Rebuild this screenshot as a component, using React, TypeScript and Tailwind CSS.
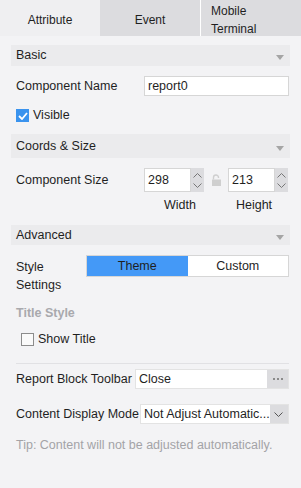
import React from 'react';

const font = { fontFamily: '"Liberation Sans", Arial, sans-serif' };

const SectionHeader = ({ title, h }: { title: string; h: string }) => (
  <div className={`flex items-center justify-between bg-[#ebebed] pl-[5px] pr-[6px] ${h}`}>
    <span className="text-[12.5px] text-[#1f1f1f]">{title}</span>
    <svg width="8" height="5" viewBox="0 0 8 5" className="mt-[4px]">
      <path d="M0 0 H8 L4 5 Z" fill="#a5a5a5" />
    </svg>
  </div>
);

const Spinner = () => (
  <div className="flex w-[13px] flex-col items-center justify-center gap-[5px] bg-[#dcdcdf]">
    <svg width="9" height="5" viewBox="0 0 9 5">
      <path d="M0.5 4.5 L4.5 0.5 L8.5 4.5" fill="none" stroke="#777" strokeWidth="1" />
    </svg>
    <svg width="9" height="5" viewBox="0 0 9 5">
      <path d="M0.5 0.5 L4.5 4.5 L8.5 0.5" fill="none" stroke="#777" strokeWidth="1" />
    </svg>
  </div>
);

const NumberBox = ({ value }: { value: string }) => (
  <div className="flex h-[24px]">
    <div className="flex w-[47px] items-center border border-[#d6d6d6] bg-white pl-[3px] text-[12.5px] text-[#1f1f1f]">
      {value}
    </div>
    <Spinner />
  </div>
);

export default function App() {
  return (
    <div className="h-[488px] w-[301px] overflow-hidden bg-[#f3f3f5]" style={font}>
      {/* tabs */}
      <div className="flex h-[36px] text-[12px] text-[#1f1f1f]">
        <div className="flex w-[100px] items-center justify-center bg-[#efeff1] pt-[3px]">Attribute</div>
        <div className="flex w-[100px] items-center justify-center bg-[#dcdcdf] pt-[3px]">Event</div>
        <div className="w-px bg-white" />
        <div className="flex-1 bg-[#dcdcdf] pl-[10px] pt-[2px] leading-[18px]">
          Mobile
          <br />
          Terminal
        </div>
      </div>

      <div className="flex flex-col px-[11px] pt-[9px] text-[12.5px] text-[#1f1f1f]">
        <SectionHeader title="Basic" h="h-[21px]" />

        <div className="mt-[10px] flex h-[20px] items-center pl-[5px] pr-[1px]">
          <span className="flex-1">Component Name</span>
          <div className="flex h-full w-[145px] items-center border border-[#d6d6d6] bg-white pl-[3px]">report0</div>
        </div>

        <div className="mt-[13px] flex h-[13px] items-center gap-[4px] pl-[5px]">
          <div className="flex h-[13px] w-[13px] items-center justify-center bg-[#3a93ee]">
            <svg width="10" height="8" viewBox="0 0 10 8">
              <path d="M1 4 L4 7 L9 1" fill="none" stroke="white" strokeWidth="1.8" />
            </svg>
          </div>
          <span>Visible</span>
        </div>

        <div className="mt-[12px]">
          <SectionHeader title="Coords & Size" h="h-[24px]" />
        </div>

        <div className="mt-[10px] flex h-[24px] items-center pl-[5px]">
          <span className="w-[128px]">Component Size</span>
          <NumberBox value="298" />
          <div className="flex w-[24px] justify-center">
            <svg width="9" height="12" viewBox="0 0 9 12">
              <path d="M1.5 5.5 V3.5 a2.5 2.5 0 0 1 5 0 V4" fill="none" stroke="#cfcfcf" strokeWidth="1.4" />
              <rect x="0" y="5.5" width="9" height="6.5" fill="#cfcfcf" />
            </svg>
          </div>
          <NumberBox value="213" />
        </div>

        <div className="mt-[5px] flex h-[16px] items-center pl-[153px]">
          <span>Width</span>
          <span className="ml-[40px]">Height</span>
        </div>

        <div className="mt-[12px]">
          <SectionHeader title="Advanced" h="h-[20px]" />
        </div>

        <div className="mt-[10px] flex pl-[5px] pr-[1px]">
          <div className="mt-[3px] w-[70px] leading-[18px]">
            Style
            <br />
            Settings
          </div>
          <div className="flex h-[22px] flex-1 border border-[#d6d6d6] bg-white">
            <div className="flex flex-1 items-center justify-center bg-[#4499f7]">Theme</div>
            <div className="flex flex-1 items-center justify-center">Custom</div>
          </div>
        </div>

        <div className="mt-[11px] flex h-[16px] items-center pl-[5px] font-bold text-[#a9a9ad]">Title Style</div>

        <div className="mt-[12px] flex h-[13px] items-center gap-[4px] pl-[10px]">
          <div className="h-[13px] w-[13px] border border-[#8c8c8c] bg-[#fafafa]" />
          <span>Show Title</span>
        </div>

        <div className="ml-[5px] mr-[1px] mt-[17px] h-px bg-[#e1e1e4]" />

        <div className="mt-[5px] flex h-[20px] items-center pl-[5px] pr-[1px]">
          <span className="flex-1 whitespace-nowrap">Report Block Toolbar</span>
          <div className="flex h-full w-[154px] border border-[#e3e3e3] bg-white">
            <div className="flex flex-1 items-center pl-[3px]">Close</div>
            <div className="flex w-[21px] items-center justify-center gap-[2px] bg-[#dcdcdf]">
              <span className="h-[2px] w-[2px] bg-[#8a8a8a]" />
              <span className="h-[2px] w-[2px] bg-[#8a8a8a]" />
              <span className="h-[2px] w-[2px] bg-[#8a8a8a]" />
            </div>
          </div>
        </div>

        <div className="mt-[15px] flex h-[20px] items-center pl-[5px] pr-[1px]">
          <span className="flex-1 whitespace-nowrap">Content Display Mode</span>
          <div className="flex h-full w-[149px] border border-[#e3e3e3] bg-white">
            <div className="flex flex-1 items-center whitespace-nowrap pl-[3px]">Not Adjust Automatic...</div>
            <div className="flex w-[21px] items-center justify-center bg-[#dcdcdf]">
              <svg width="9" height="5" viewBox="0 0 9 5">
                <path d="M0.5 0.5 L4.5 4.5 L8.5 0.5" fill="none" stroke="#555" strokeWidth="1" />
              </svg>
            </div>
          </div>
        </div>

        <div className="mt-[13px] flex h-[16px] items-center whitespace-nowrap pl-[5px] text-[#a3a3a7]">
          Tip: Content will not be adjusted automatically.
        </div>
      </div>
    </div>
  );
}
